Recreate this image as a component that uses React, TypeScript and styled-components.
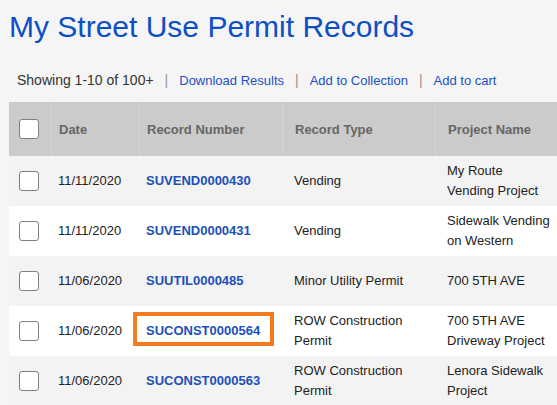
import * as React from 'react'
import styled, { createGlobalStyle } from 'styled-components'

interface RecordRow {
  date: string
  number: string
  type: string
  project: string
  highlight?: boolean
}

const records: RecordRow[] = [
  { date: '11/11/2020', number: 'SUVEND0000430', type: 'Vending', project: 'My Route\nVending Project' },
  { date: '11/11/2020', number: 'SUVEND0000431', type: 'Vending', project: 'Sidewalk Vending\non Western' },
  { date: '11/06/2020', number: 'SUUTIL0000485', type: 'Minor Utility Permit', project: '700 5TH AVE' },
  { date: '11/06/2020', number: 'SUCONST0000564', type: 'ROW Construction\nPermit', project: '700 5TH AVE\nDriveway Project', highlight: true },
  { date: '11/06/2020', number: 'SUCONST0000563', type: 'ROW Construction\nPermit', project: 'Lenora Sidewalk\nProject' },
]

const columns = '42px 88px 143px 153px 150px'

const App: React.FC = () => (
  <>
    <GlobalStyle />
    <Page>
      <Title>My Street Use Permit Records</Title>
      <Toolbar>
        <Count>Showing 1-10 of 100+</Count>
        <Sep>|</Sep>
        <ToolLink href="#">Download Results</ToolLink>
        <Sep>|</Sep>
        <ToolLink href="#">Add to Collection</ToolLink>
        <Sep>|</Sep>
        <ToolLink href="#">Add to cart</ToolLink>
      </Toolbar>
      <Table>
        <HeaderRow>
          <CheckCell><Box /></CheckCell>
          <HeadCell>Date</HeadCell>
          <HeadCell>Record Number</HeadCell>
          <HeadCell $wide>Record Type</HeadCell>
          <HeadCell $wide>Project Name</HeadCell>
        </HeaderRow>
        {records.map((r, i) => (
          <Row key={r.number} $odd={i % 2 === 0}>
            <CheckCell><Box /></CheckCell>
            <Cell>{r.date}</Cell>
            <Cell>
              <RecordLink href="#" $highlight={r.highlight}>{r.number}</RecordLink>
            </Cell>
            <Cell $wide>{r.type}</Cell>
            <Cell $wide>{r.project}</Cell>
          </Row>
        ))}
      </Table>
    </Page>
  </>
)

const GlobalStyle = createGlobalStyle`
  html, body {
    margin: 0;
    background: #f5f5f5;
    font-family: "Liberation Sans", Arial, sans-serif;
    overflow: hidden;
  }
`

const Page = styled.div`
  padding: 10px 0 0 9px;
`

const Title = styled.h1`
  margin: 0;
  color: #0d4fc6;
  font-size: 30px;
  font-weight: 400;
  line-height: 34px;
`

const Toolbar = styled.div`
  display: flex;
  align-items: baseline;
  margin: 26px 0 11px;
  padding-left: 8px;
  line-height: 20px;
`

const Count = styled.span`
  color: #333;
  font-size: 14px;
`

const Sep = styled.span`
  margin: 0 11px;
  color: #9a8f8f;
  font-size: 14px;
`

const ToolLink = styled.a`
  color: #1b50c4;
  font-size: 13px;
  text-decoration: none;
`

const Table = styled.div`
  width: 576px;
  font-size: 13px;
`

const HeaderRow = styled.div`
  display: grid;
  grid-template-columns: ${columns};
  height: 54px;
  background: #cbcbcb;
`

const Row = styled.div<{ $odd: boolean }>`
  display: grid;
  grid-template-columns: ${columns};
  height: 50px;
  background: ${p => (p.$odd ? '#f3f3f3' : '#ffffff')};
`

const CheckCell = styled.div`
  display: flex;
  align-items: center;
  padding-left: 10px;
`

const Box = styled.span`
  box-sizing: border-box;
  width: 20px;
  height: 20px;
  border: 1.5px solid #808080;
  border-radius: 3px;
  background: #fff;
`

const HeadCell = styled.div<{ $wide?: boolean }>`
  display: flex;
  align-items: center;
  padding-left: ${p => (p.$wide ? '12px' : '7px')};
  border-left: 1px solid #d6d6d6;
  color: #666;
  font-weight: 700;
`

const Cell = styled.div<{ $wide?: boolean }>`
  display: flex;
  align-items: center;
  padding-left: ${p => (p.$wide ? '12px' : '7px')};
  color: #222;
  line-height: 20px;
  white-space: pre-line;
`

const RecordLink = styled.a<{ $highlight?: boolean }>`
  position: relative;
  color: #2150b8;
  font-weight: 700;
  text-decoration: none;

  ${p => p.$highlight && `
    &::after {
      content: '';
      position: absolute;
      left: -13px;
      right: -14px;
      top: -9px;
      bottom: -5px;
      border: 4px solid #f47c20;
    }
  `}
`

export default App
